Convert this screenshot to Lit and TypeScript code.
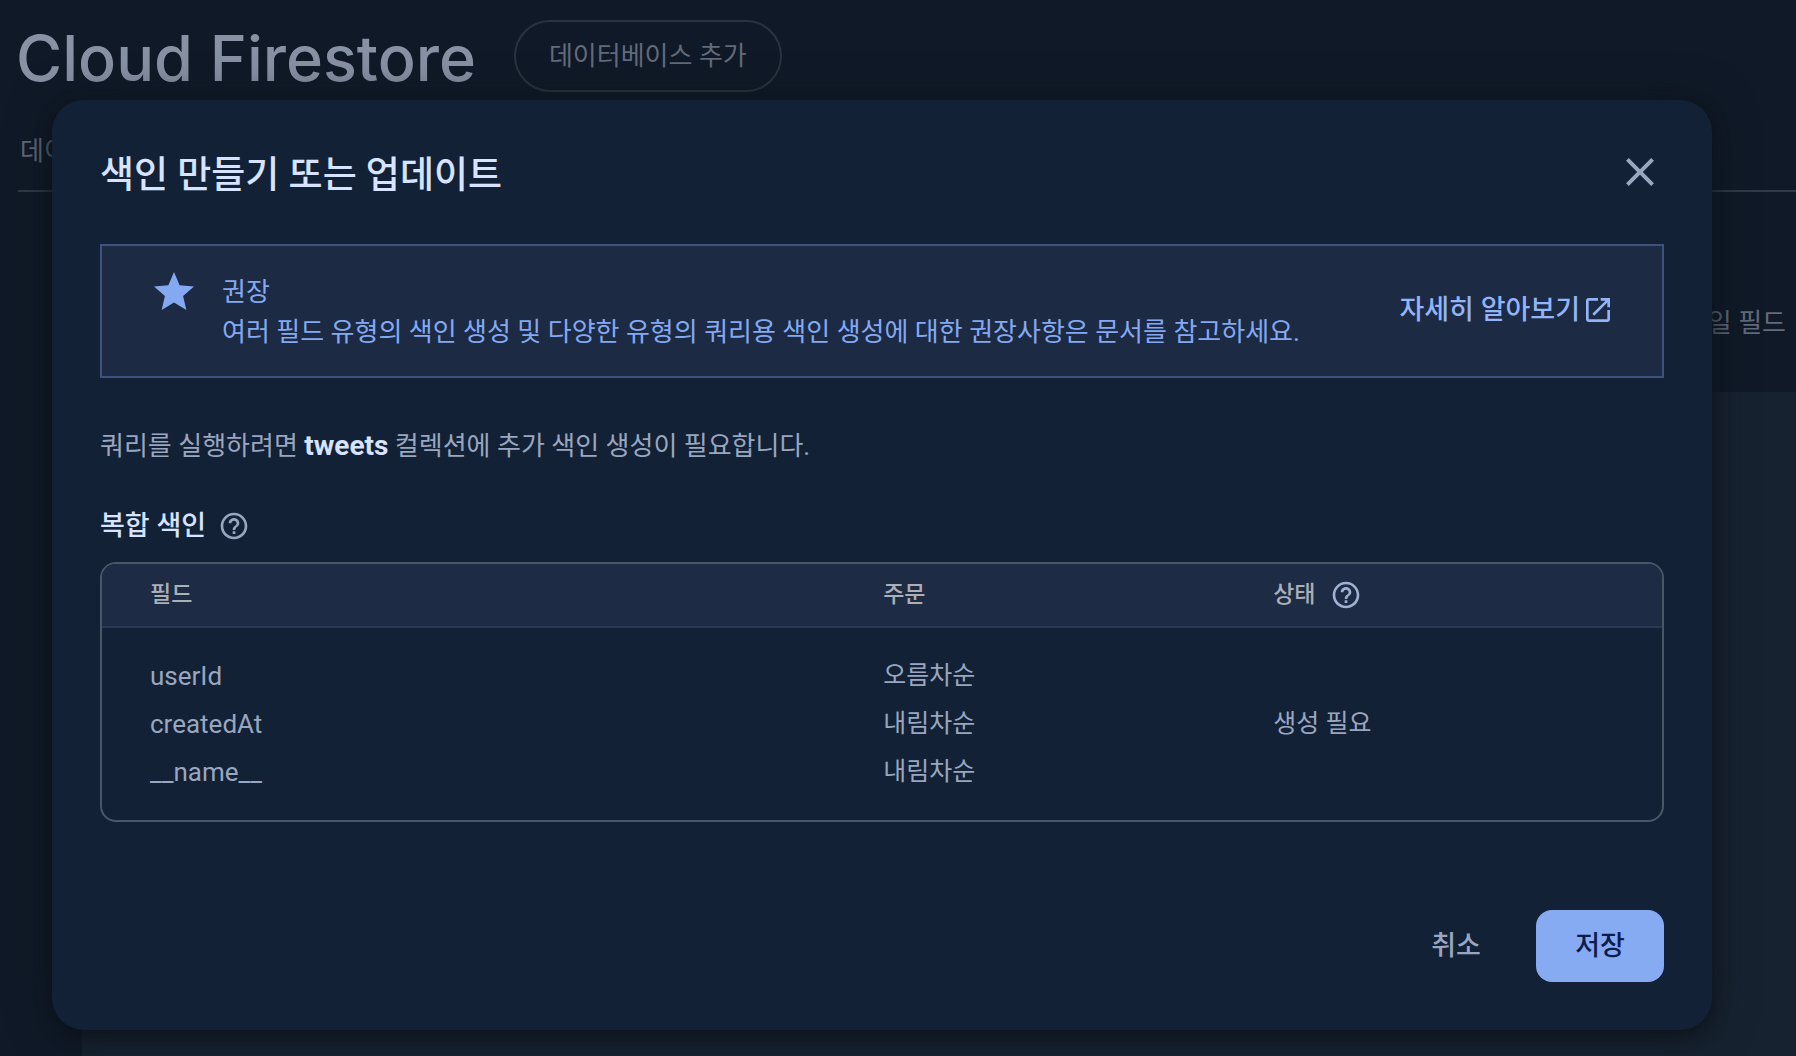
import { LitElement, html, css, svg } from "lit";
import { customElement, property } from "lit/decorators.js";

type IconName = "close" | "star" | "open" | "help";

const ICON_PATHS: Record<IconName, string> = {
  close:
    "M19 6.41 17.59 5 12 10.59 6.41 5 5 6.41 10.59 12 5 17.59 6.41 19 12 13.41 17.59 19 19 17.59 13.41 12z",
  star: "M12 17.27 18.18 21l-1.64-7.03L22 9.24l-7.19-.61L12 2 9.19 8.63 2 9.24l5.46 4.73L5.82 21z",
  open: "M19 19H5V5h7V3H5c-1.11 0-2 .9-2 2v14c0 1.1.89 2 2 2h14c1.1 0 2-.9 2-2v-7h-2v7zM14 3v2h3.59l-9.83 9.83 1.41 1.41L19 6.41V10h2V3h-7z",
  help: "M11 18h2v-2h-2v2zm1-16C6.48 2 2 6.48 2 12s4.48 10 10 10 10-4.48 10-10S17.52 2 12 2zm0 18c-4.41 0-8-3.59-8-8s3.59-8 8-8 8 3.59 8 8-3.59 8-8 8zm0-14c-2.21 0-4 1.79-4 4h2c0-1.1.9-2 2-2s2 .9 2 2c0 2-3 1.75-3 5h2c0-2.25 3-2.5 3-5 0-2.21-1.79-4-4-4z",
};

@customElement("ui-icon")
export class UiIcon extends LitElement {
  static styles = css`
    :host {
      display: block;
      flex: none;
      width: 32px;
      height: 32px;
    }
    .glyph {
      display: block;
      width: 100%;
      height: 100%;
      fill: currentColor;
    }
  `;

  @property() name: IconName = "help";

  render() {
    return html`<svg class="glyph" viewBox="0 0 24 24" aria-hidden="true">
      ${svg`<path d=${ICON_PATHS[this.name]}></path>`}
    </svg>`;
  }
}

@customElement("console-page")
export class ConsolePage extends LitElement {
  static styles = css`
    :host {
      display: flex;
      flex-direction: column;
      min-height: 100vh;
      color: #626b7a;
    }
    .header {
      display: flex;
      align-items: center;
      gap: 38px;
      padding: 20px 16px 0;
    }
    .title {
      margin: 0;
      padding-top: 4px;
      font: 500 63px/68px Inter, Lato, sans-serif;
      color: #8892a5;
    }
    .add {
      box-sizing: border-box;
      height: 72px;
      padding: 0 33px;
      border: 2px solid #2a343f;
      border-radius: 36px;
      background: none;
      color: inherit;
      font: inherit;
      white-space: nowrap;
    }
    .tabs {
      display: flex;
      align-items: center;
      box-sizing: border-box;
      height: 84px;
      margin: 16px 0 0 18px;
      padding: 4px 0 0 2px;
      border-bottom: 2px solid #303a47;
    }
    .tab {
      color: inherit;
      text-decoration: none;
    }
    .subtabs {
      display: flex;
      align-items: center;
      justify-content: flex-end;
      height: 200px;
      box-sizing: border-box;
      padding: 62px 10px 0 0;
    }
    .panel {
      flex: 1;
      margin-left: 82px;
      background: #172230;
    }
  `;

  render() {
    return html`
      <header class="header">
        <h1 class="title">Cloud Firestore</h1>
        <button class="add" type="button">데이터베이스 추가</button>
      </header>
      <nav class="tabs"><a class="tab" href="#data">데이터</a></nav>
      <div class="subtabs"><a class="tab" href="#single">단일 필드</a></div>
      <section class="panel"></section>
    `;
  }
}

interface IndexRow {
  field: string;
  order: string;
  status: string;
}

@customElement("index-dialog")
export class IndexDialog extends LitElement {
  static styles = css`
    :host {
      display: flex;
      flex-direction: column;
      box-sizing: border-box;
      padding: 48px;
      border-radius: 32px;
      background: #122136;
      box-shadow: 0 6px 16px rgba(8, 12, 18, 0.5), 0 2px 44px rgba(14, 24, 30, 0.7);
      color: #9aa6bf;
    }
    .top {
      display: flex;
      align-items: center;
      justify-content: space-between;
      height: 48px;
      margin-bottom: 48px;
    }
    .heading {
      margin: 0;
      padding-top: 8px;
      font-size: 37px;
      font-weight: 500;
      color: #d7e3ff;
    }
    .close {
      padding: 0;
      border: 0;
      background: none;
      color: #9aa6bf;
    }
    .close ui-icon,
    .star {
      width: 48px;
      height: 48px;
    }
    .banner {
      display: flex;
      align-items: center;
      gap: 24px;
      padding: 22px 48px 24px;
      border: 2px solid #3d527c;
      background: #1c2b43;
      color: #84a9f2;
    }
    .star {
      align-self: flex-start;
    }
    .advice {
      flex: 1;
      padding-top: 4px;
      line-height: 40px;
      font-size: 26px;
    }
    .advice p {
      margin: 0;
    }
    .learn {
      display: flex;
      align-items: center;
      gap: 2px;
      color: #93b4f8;
      font-size: 27px;
      font-weight: 500;
      text-decoration: none;
      white-space: nowrap;
    }
    .intro {
      margin: 48px 0 44px;
      line-height: 40px;
    }
    .strong {
      color: #d7e3ff;
      font-size: 28px;
      font-weight: 700;
    }
    .subhead {
      display: flex;
      align-items: center;
      gap: 12px;
      margin-bottom: 20px;
      line-height: 32px;
    }
    .subtitle {
      margin: 0;
      font-size: 27px;
      font-weight: 500;
      color: #d7e3ff;
    }
    .frame {
      overflow: hidden;
      border: 2px solid #4a5769;
      border-radius: 16px;
    }
    .table {
      width: 100%;
      table-layout: fixed;
      border-collapse: separate;
      border-spacing: 0;
      font-size: 26px;
      line-height: 48px;
    }
    .table th,
    .table td {
      box-sizing: border-box;
      padding: 0 0 0 48px;
      text-align: left;
    }
    .table th {
      height: 64px;
      border-bottom: 2px solid #2b3a53;
      background: #1d2c44;
      color: #abafb6;
      font-size: 23px;
      font-weight: 500;
    }
    .table tbody tr:first-child td {
      padding-top: 24px;
    }
    .table tbody tr:last-child td {
      padding-bottom: 24px;
    }
    .table .value {
      font-size: 25px;
    }
    .field {
      width: 47%;
    }
    .order {
      width: 25%;
    }
    .with-help {
      display: flex;
      align-items: center;
      gap: 14px;
    }
    .with-help ui-icon {
      color: #9fb0d2;
    }
    .actions {
      display: flex;
      justify-content: flex-end;
      gap: 16px;
      margin-top: 88px;
    }
    .button {
      height: 72px;
      min-width: 128px;
      padding: 0 36px;
      border: 0;
      border-radius: 16px;
      background: none;
      color: #9aa6bf;
      font: inherit;
      font-size: 27px;
      font-weight: 500;
    }
    .primary {
      background: #87abf3;
      color: #0c1d4d;
    }
  `;

  private rows: IndexRow[] = [
    { field: "userId", order: "오름차순", status: "" },
    { field: "createdAt", order: "내림차순", status: "생성 필요" },
    { field: "__name__", order: "내림차순", status: "" },
  ];

  render() {
    return html`
      <header class="top">
        <h2 class="heading">색인 만들기 또는 업데이트</h2>
        <button class="close" type="button" aria-label="닫기"><ui-icon name="close"></ui-icon></button>
      </header>
      <section class="banner">
        <ui-icon class="star" name="star"></ui-icon>
        <div class="advice">
          <p>권장</p>
          <p>여러 필드 유형의 색인 생성 및 다양한 유형의 쿼리용 색인 생성에 대한 권장사항은 문서를 참고하세요.</p>
        </div>
        <a class="learn" href="#docs">자세히 알아보기<ui-icon name="open"></ui-icon></a>
      </section>
      <p class="intro">쿼리를 실행하려면 <strong class="strong">tweets</strong> 컬렉션에 추가 색인 생성이 필요합니다.</p>
      <div class="subhead">
        <h3 class="subtitle">복합 색인</h3>
        <ui-icon name="help"></ui-icon>
      </div>
      <div class="frame">
        <table class="table">
          <thead>
            <tr>
              <th class="field" scope="col">필드</th>
              <th class="order" scope="col">주문</th>
              <th scope="col"><span class="with-help">상태<ui-icon name="help"></ui-icon></span></th>
            </tr>
          </thead>
          <tbody>
            ${this.rows.map(
              (row) => html`<tr>
                <td>${row.field}</td>
                <td class="value">${row.order}</td>
                <td class="value">${row.status}</td>
              </tr>`
            )}
          </tbody>
        </table>
      </div>
      <footer class="actions">
        <button class="button" type="button">취소</button>
        <button class="button primary" type="button">저장</button>
      </footer>
    `;
  }
}

@customElement("app-root")
export class AppRoot extends LitElement {
  static styles = css`
    :host {
      display: block;
      position: relative;
      min-height: 100vh;
      overflow: hidden;
      background: #101927;
      font: 400 26px/40px Roboto, "Noto Sans CJK KR", sans-serif;
    }
    .overlay {
      position: absolute;
      inset: 0;
      padding: 100px 84px 26px 52px;
    }
  `;

  render() {
    return html`
      <console-page></console-page>
      <div class="overlay">
        <index-dialog role="dialog" aria-modal="true"></index-dialog>
      </div>
    `;
  }
}
